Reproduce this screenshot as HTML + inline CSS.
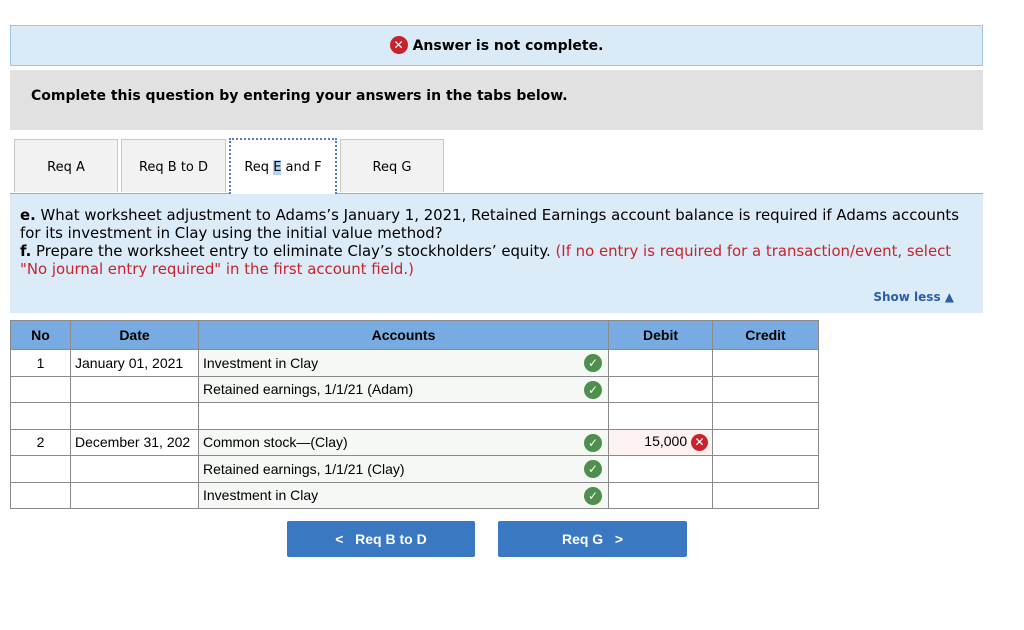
<!DOCTYPE html>
<html><head><style>
body{margin:0;background:#fff;font-family:"Liberation Sans",Arial,sans-serif;width:1024px;height:630px;position:relative;overflow:hidden;color:#000}
.a{position:absolute}
.tab{position:absolute;top:139px;height:53px;background:#f2f2f2;border:1px solid #c8c8c8;border-bottom:none;box-sizing:border-box;font-family:"DejaVu Sans",Verdana,sans-serif;font-size:13px;text-align:center;line-height:56px}
table{position:absolute;left:10px;top:320px;border-collapse:collapse;font-size:14px}
td,th{border:1px solid #8a8a8a;padding:0 4px;height:26.5px;box-sizing:border-box;white-space:nowrap;overflow:hidden;vertical-align:middle}
th{background:#78abe1;height:29px;font-weight:bold}
.acc{background:#f6f8f5;position:relative}
.ok{position:absolute;right:6px;top:4px;width:18px;height:18px;border-radius:50%;background:#4e8f4e;color:#fff;font-size:12px;line-height:18px;text-align:center}
.btn{position:absolute;top:521px;height:36px;background:#3a78c2;color:#fff;font-weight:bold;font-size:14px;line-height:36px;text-align:center;border-radius:2px}
</style></head><body>
<div class="a" style="left:10px;top:25px;width:971px;height:39px;background:#dbeaf7;border:1px solid #9cc3e8;text-align:center;line-height:40px;font-weight:bold;font-family:'DejaVu Sans',Verdana,sans-serif;font-size:14px"><span style="display:inline-block;width:18px;height:18px;border-radius:50%;background:#c8232c;color:#fff;font-size:12px;line-height:18px;vertical-align:middle;margin-right:5px;position:relative;top:-1px">✕</span>Answer is not complete.</div>
<div class="a" style="left:10px;top:70px;width:973px;height:60px;background:#e1e1e1;font-weight:bold;font-family:'DejaVu Sans',Verdana,sans-serif;font-size:14px;line-height:52px;padding-left:21px;box-sizing:border-box">Complete this question by entering your answers in the tabs below.</div>
<div class="tab" style="left:14px;width:104px">Req A</div>
<div class="tab" style="left:121px;width:105px">Req B to D</div>
<div class="tab" style="left:229px;width:108px;top:138px;height:56px;background:#fff;border:2px dotted #4a7fc8;border-bottom:none;line-height:56px">Req <span style="background:#b8d4f5">E</span> and F</div>
<div class="tab" style="left:340px;width:104px">Req G</div>
<div class="a" style="left:10px;top:193px;width:219px;height:1px;background:#aaa"></div>
<div class="a" style="left:337px;top:193px;width:646px;height:1px;background:#aaa"></div>
<div class="a" style="left:10px;top:194px;width:973px;height:119px;background:#dcebf8;font-family:'DejaVu Sans',Verdana,sans-serif;font-size:14.9px;line-height:18px;padding:12px 10px;box-sizing:border-box;white-space:nowrap">
<b>e.</b> What worksheet adjustment to Adams’s January 1, 2021, Retained Earnings account balance is required if Adams accounts<br>for its investment in Clay using the initial value method?<br><b>f.</b> Prepare the worksheet entry to eliminate Clay’s stockholders’ equity. <span style="color:#c8232c">(If no entry is required for a transaction/event, select<br>"No journal entry required" in the first account field.)</span>
<div style="position:absolute;right:29px;top:94px;font-size:12px;font-weight:bold;color:#2a5fa8">Show less ▲</div></div>
<table>
<tr><th style="width:60px">No</th><th style="width:128px">Date</th><th style="width:410px">Accounts</th><th style="width:104px">Debit</th><th style="width:106px">Credit</th></tr>
<tr><td style="text-align:center">1</td><td>January 01, 2021</td><td class="acc">Investment in Clay<span class="ok">✓</span></td><td></td><td></td></tr>
<tr><td></td><td></td><td class="acc">Retained earnings, 1/1/21 (Adam)<span class="ok">✓</span></td><td></td><td></td></tr>
<tr><td></td><td></td><td></td><td></td><td></td></tr>
<tr><td style="text-align:center">2</td><td>December 31, 202</td><td class="acc">Common stock—(Clay)<span class="ok">✓</span></td><td style="background:#fdf2f2;text-align:right">15,000 <span style="display:inline-block;width:17px;height:17px;border-radius:50%;background:#c8232c;color:#fff;font-size:12px;line-height:17px;text-align:center;vertical-align:middle">✕</span></td><td></td></tr>
<tr><td></td><td></td><td class="acc">Retained earnings, 1/1/21 (Clay)<span class="ok">✓</span></td><td></td><td></td></tr>
<tr><td></td><td></td><td class="acc">Investment in Clay<span class="ok">✓</span></td><td></td><td></td></tr>
</table>
<div class="btn" style="left:287px;width:188px">&lt;&nbsp;&nbsp;&nbsp;Req B to D</div>
<div class="btn" style="left:498px;width:189px">Req G&nbsp;&nbsp;&nbsp;&gt;</div>
</body></html>
